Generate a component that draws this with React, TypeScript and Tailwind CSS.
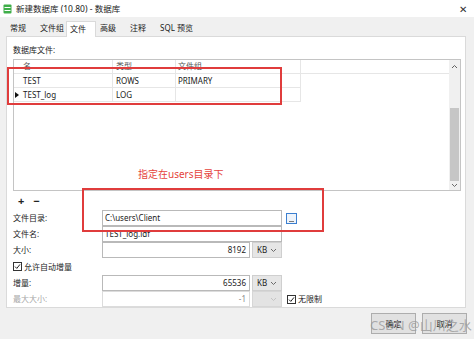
import React from "react";

const tabs = ["常规", "文件组", "文件", "高级", "注释", "SQL 预览"];

function DbIcon() {
  return (
    <svg width="9" height="10" viewBox="0 0 9 10">
      <rect x="0.5" y="0.5" width="8" height="9" rx="1" fill="#3fae49" />
      <rect x="1.5" y="3" width="6" height="1" fill="#ffffff" />
      <rect x="1.5" y="6" width="6" height="1" fill="#ffffff" />
    </svg>
  );
}

function Check() {
  return (
    <span className="flex h-[9px] w-[9px] items-center justify-center border border-[#333333] bg-white">
      <svg width="7" height="7" viewBox="0 0 7 7">
        <path d="M1 3.6 L2.8 5.4 L6 1.4" fill="none" stroke="#222222" strokeWidth="1" />
      </svg>
    </span>
  );
}

function Chevron({ light }: { light?: boolean }) {
  return (
    <svg width="7" height="5" viewBox="0 0 7 5">
      <path d="M1 1 L3.5 3.5 L6 1" fill="none" stroke={light ? "#c4c4c4" : "#6b6b6b"} strokeWidth="1" />
    </svg>
  );
}

function UnitSelect({ value, disabled }: { value: string; disabled?: boolean }) {
  return (
    <div
      className={`ml-[2px] flex h-[16px] w-[30px] items-center justify-between border pl-[4px] pr-[4px] ${
        disabled ? "border-[#d6d6d6] bg-[#e3e3e3]" : "border-[#cfcfcf] bg-[#e6e6e6]"
      }`}
    >
      <span className="text-[#222]">{value}</span>
      <Chevron light={disabled} />
    </div>
  );
}

export default function App() {
  return (
    <div className="relative h-[339px] w-[474px] overflow-hidden bg-[#f0f0f0] font-['Noto_Sans','Noto_Sans_CJK_SC',sans-serif] text-[8px] leading-[12px] text-[#1b1b1b]">
      {/* title bar */}
      <div className="flex h-[17px] items-center bg-white pl-[3px] pr-[7px]">
        <DbIcon />
        <span className="ml-[4px] text-[8.5px] text-[#222]">新建数据库 (10.80) - 数据库</span>
        <span className="ml-auto text-[10px] text-[#333]">✕</span>
      </div>

      {/* tabs */}
      <div className="flex h-[19px] items-end pl-[6px]">
        {tabs.map((t, i) =>
          i === 2 ? (
            <div
              key={t}
              className="relative z-10 -mb-px flex h-[16px] w-[30px] items-start border-x border-t border-[#dadada] bg-white pl-[3px] pt-[1px]"
            >
              {t}
            </div>
          ) : (
            <div key={t} className={`flex h-[14px] items-start pl-[4px] ${i === 5 ? "w-[44px]" : "w-[30px]"}`}>
              {t}
            </div>
          )
        )}
      </div>

      {/* panel */}
      <div className="ml-[6px] mr-[8px] flex h-[272px] flex-col border border-[#dadada] bg-white pl-[6px]">
        <div className="mt-[7px] h-[12px]">数据库文件:</div>

        {/* grid */}
        <div className="mt-[3px] flex h-[132px] w-[448px] border border-[#c4c4c4]">
          <div className="flex-1">
            <div className="flex h-[14px] border-b border-[#e6e6e6] text-[#555]">
              <div className="w-[6px]" />
              <div className="w-[93px] border-r border-[#e6e6e6] pl-[3px]">名</div>
              <div className="w-[63px] border-r border-[#e6e6e6] pl-[3px]">类型</div>
              <div className="w-[125px] border-r border-[#e6e6e6] pl-[2px]">文件组</div>
            </div>
            <div className="flex h-[14px] items-center">
              <div className="flex h-full w-[287px] items-center border-b border-[#e6e6e6]">
                <div className="w-[6px]" />
                <div className="flex h-full w-[93px] items-center border-r border-[#e6e6e6] pl-[3px]">TEST</div>
                <div className="flex h-full w-[63px] items-center border-r border-[#e6e6e6] pl-[3px]">ROWS</div>
                <div className="flex h-full w-[125px] items-center border-r border-[#e6e6e6] pl-[2px]">PRIMARY</div>
              </div>
            </div>
            <div className="flex h-[14px] items-center">
              <div className="flex h-full w-[287px] items-center border-b border-[#e6e6e6]">
                <div className="flex w-[6px] items-center pl-[1px]">
                  <svg width="4" height="6" viewBox="0 0 4 6">
                    <path d="M0 0 L4 3 L0 6 Z" fill="#111" />
                  </svg>
                </div>
                <div className="flex h-full w-[93px] items-center border-r border-[#e6e6e6] pl-[3px]">TEST_log</div>
                <div className="flex h-full w-[63px] items-center border-r border-[#e6e6e6] pl-[3px]">LOG</div>
                <div className="h-full w-[125px] border-r border-[#e6e6e6]" />
              </div>
            </div>
          </div>
          {/* scrollbar */}
          <div className="flex w-[11px] flex-col items-center bg-[#f0f0f0]">
            <div className="flex h-[12px] items-center">
              <svg width="7" height="5" viewBox="0 0 7 5">
                <path d="M1 4 L3.5 1.5 L6 4" fill="none" stroke="#606060" strokeWidth="1" />
              </svg>
            </div>
            <div className="mt-[36px] h-[73px] w-[9px] bg-[#c6c6c6]" />
            <div className="flex flex-1 items-center">
              <Chevron />
            </div>
          </div>
        </div>

        {/* + - */}
        <div className="flex h-[19px] items-center gap-[9px] pl-[5px] text-[11px] font-bold text-[#222]">
          <span>+</span>
          <span>−</span>
        </div>

        {/* form */}
        <div className="flex flex-col">
          <div className="flex h-[16px] items-center">
            <div className="w-[89px]">文件目录:</div>
            <div className="flex h-[16px] w-[180px] items-center border border-[#b9b9b9] pl-[2px]">C:\users\Client</div>
            <div className="ml-[4px] flex h-[11px] w-[11px] items-end justify-center border border-[#3b7fd0] bg-[#eef4fb] pb-[1px]">
              <span className="block h-px w-[5px] bg-[#7a7a7a]" />
            </div>
          </div>
          <div className="flex h-[16px] items-center">
            <div className="w-[89px]">文件名:</div>
            <div className="flex h-[16px] w-[180px] items-center border border-[#b9b9b9] pl-[2px]">TEST_log.ldf</div>
          </div>
          <div className="flex h-[16px] items-center">
            <div className="w-[89px]">大小:</div>
            <div className="flex h-[16px] w-[148px] items-center justify-end border border-[#b9b9b9] pr-[3px]">8192</div>
            <UnitSelect value="KB" />
          </div>
          <div className="flex h-[17px] items-center gap-[2px]">
            <Check />
            <span>允许自动增量</span>
          </div>
          <div className="flex h-[16px] items-center">
            <div className="w-[89px]">增量:</div>
            <div className="flex h-[16px] w-[148px] items-center justify-end border border-[#b9b9b9] pr-[3px]">65536</div>
            <UnitSelect value="KB" />
          </div>
          <div className="flex h-[16px] items-center">
            <div className="w-[89px] text-[#a8a8a8]">最大大小:</div>
            <div className="flex h-[16px] w-[148px] items-center justify-end border border-[#dcdcdc] pr-[3px] text-[#8a8a8a]">-1</div>
            <UnitSelect value="" disabled />
            <div className="ml-[5px] flex items-center gap-[2px]">
              <Check />
              <span>无限制</span>
            </div>
          </div>
        </div>
      </div>

      {/* footer buttons */}
      <div className="flex justify-end gap-[6px] pr-[7px] pt-[5px]">
        <div className="flex h-[21px] w-[45px] items-center justify-center border border-[#adadad] bg-[#e1e1e1]">确定</div>
        <div className="flex h-[21px] w-[45px] items-center justify-center border border-[#adadad] bg-[#e1e1e1]">取消</div>
      </div>

      {/* annotations */}
      <div className="absolute left-[7px] top-[67px] h-[38px] w-[275px] border-2 border-[#e03c3c]" />
      <div className="absolute left-[82px] top-[188px] h-[44px] w-[242px] border-2 border-[#e03c3c]" />
      <div className="absolute left-[138px] top-[167px] text-[10px] leading-[14px] text-[#e5433c]">指定在users目录下</div>
      <div className="absolute left-[370px] top-[316px] text-[13px] leading-[18px] text-[#9a9a9a]/80">CSDN @山川之水</div>
    </div>
  );
}
